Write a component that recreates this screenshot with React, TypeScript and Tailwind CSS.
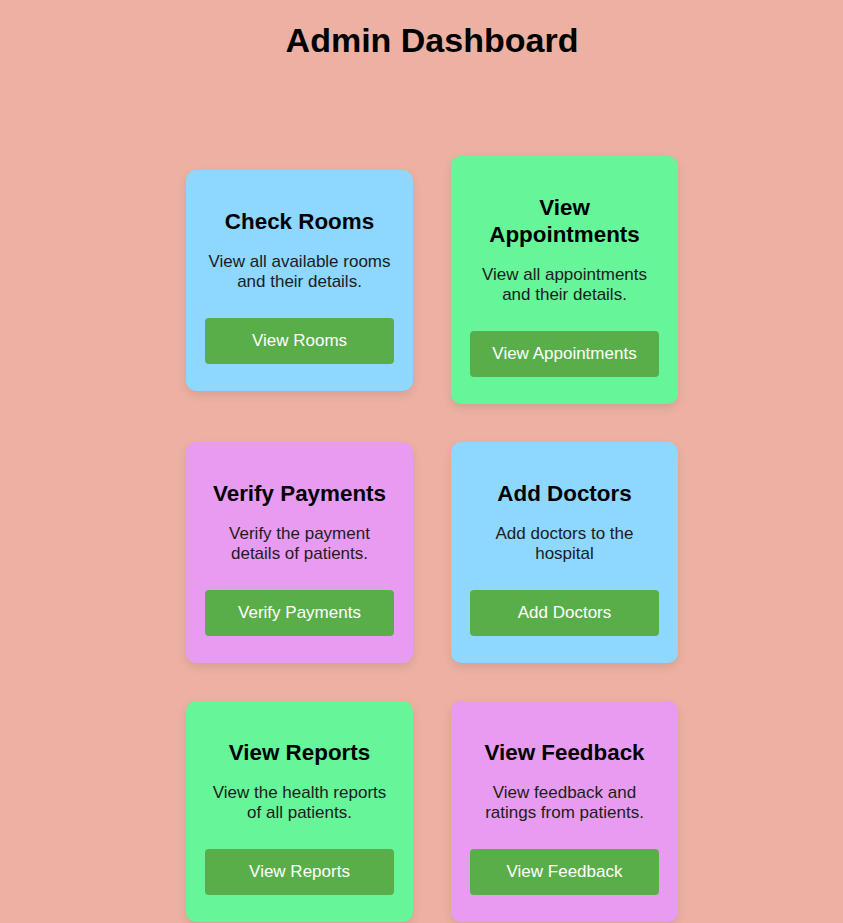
const cards = [
  { title: 'Check Rooms', text: 'View all available rooms and their details.', action: 'View Rooms', bg: 'bg-[#8ed7ff]' },
  { title: 'View Appointments', text: 'View all appointments and their details.', action: 'View Appointments', bg: 'bg-[#66f599]' },
  { title: 'Verify Payments', text: 'Verify the payment details of patients.', action: 'Verify Payments', bg: 'bg-[#e89cf1]' },
  { title: 'Add Doctors', text: 'Add doctors to the hospital', action: 'Add Doctors', bg: 'bg-[#8ed7ff]' },
  { title: 'View Reports', text: 'View the health reports of all patients.', action: 'View Reports', bg: 'bg-[#66f599]' },
  { title: 'View Feedback', text: 'View feedback and ratings from patients.', action: 'View Feedback', bg: 'bg-[#e89cf1]' },
];

export default function App() {
  return (
    <div className="min-h-screen bg-[#edb1a3] pl-[21px] font-['Liberation_Sans',Arial,sans-serif] text-black">
      <div className="flex flex-col items-center">
        <h1 className="mt-[21px] text-[34px] font-bold leading-[39px]">Admin Dashboard</h1>

        {/* Cards */}
        <div className="mt-[96px] grid grid-cols-[227px_227px] items-center gap-[38px]">
          {cards.map((card) => (
            <div
              key={card.title}
              className={`${card.bg} rounded-[10px] p-[19px] text-center shadow-[0_4px_10px_rgba(0,0,0,0.1)]`}
            >
              <h2 className="mt-[19px] text-[22.4px] font-bold leading-[27px]">{card.title}</h2>
              <p className="mx-auto mt-[17px] w-[186px] text-[17px] leading-[20px] text-[#1c1c1c]">{card.text}</p>
              <button className="mb-[8px] mt-[26px] h-[46px] w-full rounded-[4px] bg-[#5aae4a] text-[17px] text-white">
                {card.action}
              </button>
            </div>
          ))}
        </div>
      </div>
    </div>
  );
}
